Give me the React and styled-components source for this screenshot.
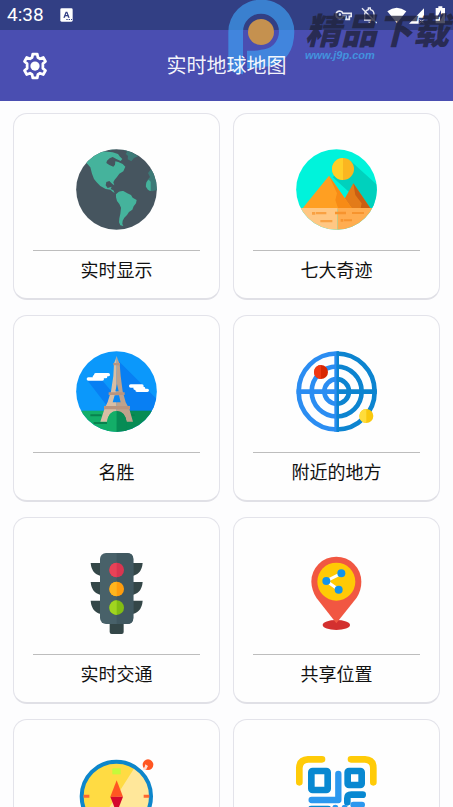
import React from 'react';
import styled, { createGlobalStyle } from 'styled-components';


function GearIcon () {
  return (
    <svg width="30" height="30" viewBox="0 0 24 24" aria-hidden="true">
      <path
        d="M10.2 2.5h3.6l.5 2.7 1.7 1 2.6-1 1.8 3.2-2.1 1.7v3.8l2.1 1.7-1.8 3.2-2.6-1-1.7 1-.5 2.7h-3.6l-.5-2.7-1.7-1-2.6 1-1.8-3.2 2.1-1.7v-3.800L3.600 8.400l1.800-3.200 2.600 1 1.700-1z"
        fill="none" stroke="#fff" strokeWidth="2.200" strokeLinejoin="round"
      />
      <circle cx="12" cy="12" r="3.700" fill="#fff" />
    </svg>
  );
}

function KeyboardBadge () {
  return (
    <svg width="13" height="14" viewBox="0 0 39 42" aria-hidden="true">
      <rect x="1" y="1" width="37" height="40" rx="4" fill="#fff" />
      <path d="M10 29 17 11h5l7 18h-5l-1-4h-7l-1 4zM17 21h5l-2.500-6z" fill="#323f84" />
      <path d="M19 33h4v3h-4zM26 33h4v3h-4zM33 33h3v3h-3z" fill="#323f84" />
    </svg>
  );
}

function StatusIcons () {
  return (
    <>
      <svg width="17" height="12" viewBox="348 26 51 36" aria-hidden="true">
        <path d="M362 32a11 11 0 1 0 10 16h9v9h10v-9h6v-9h-25a11 11 0 0 0-10-7z" fill="none" stroke="#e8e9f2" strokeWidth="5" />
        <circle cx="362" cy="43" r="4" fill="#e8e9f2" />
      </svg>
      <svg width="17" height="17" viewBox="423 18 51 51" aria-hidden="true">
        <path d="M434 57V39q2-11 11-13v-5h6v5q10 2 11 13v18z" fill="none" stroke="#e8e9f2" strokeWidth="4" />
        <path d="M426 22 470 66" stroke="#e8e9f2" strokeWidth="4" />
        <path d="M443 62h11q-5 6-11 0z" fill="#e8e9f2" />
      </svg>
      <svg width="39" height="17" viewBox="503 18 117 51" aria-hidden="true">
        <path d="M504 31Q532 10 561 31L533 67z" fill="#fff" />
        <path d="M569 68 614 22V50H598V68z" fill="#fff" />
        <path d="M602 56l11 11M613 56l-11 11" stroke="#fff" strokeWidth="3" />
      </svg>
      <svg width="11" height="18" viewBox="644 16 33 54" aria-hidden="true">
        <path d="M654 17h12v5h8v46h-28V22h8z" fill="#fff" />
        <path d="M662 28 651 48h8v14l11-21h-8z" fill="#323f84" />
      </svg>
    </>
  );
}

// all tile drawings share one square of 243 units
function Globe () {
  return (
    <TileArt viewBox="48 27 243 243">
      <clipPath id="globe"><circle cx="169.500" cy="148.500" r="121" /></clipPath>
      <g clipPath="url(#globe)">
        <rect x="48" y="27" width="243" height="243" fill="#46555f" />
        <path d="M149 32Q180 21 202 35L197 41 204 48 203 58 214 64 222 54 234 49 215 36 190 26 150 26z" fill="#3c7a77" />
        <path
          d="M78 68Q96 40 128 34L158 37 174 42 180 50 187 57 182 63 169 57 158 51 149 55 141 62 139 69 148 75 160 80 165 74 166 64 175 66 188 72 196 80 190 94 178 101 171 111 164 119 160 127 163 136 157 132 148 123 139 126 137 136 143 144 150 142 155 140 152 147 160 151 164 159 159 156 151 149 137 147 121 138 110 127 102 117 96 101 91 82 83 73z"
          fill="#45b39c"
        />
        <path
          d="M168 163Q176 152 190 153L202 160 213 165 218 173 230 180 228 190 221 199 217 209 207 216 201 225 193 233 188 242 187 252 190 258 181 256 177 247 178 235 181 221 183 203 178 192 171 183 168 172z"
          fill="#45b39c"
        />
        <path d="M273 88 264 99 270 111 263 119 258 128 257 140 264 150 276 154 292 150V90z" fill="#3c7a77" />
        <path d="M266 119q-9 7-8 20 4 12 14 14V125z" fill="#45b39c" />
      </g>
    </TileArt>
  );
}

function Pyramids () {
  return (
    <TileArt viewBox="48 27 243 243">
      <clipPath id="pyramids"><circle cx="169.500" cy="148.500" r="121" /></clipPath>
      <g clipPath="url(#pyramids)">
        <rect x="48" y="27" width="243" height="243" fill="#00f3db" />
        <path d="M212 63 295 138V205H250L158 112z" fill="#00d1bd" />
        <path d="M158 112 208 157 198 171 150 120z" fill="#00f3db" />
        <circle cx="189" cy="87" r="33" fill="#fbb620" />
        <path d="M189 54a33 33 0 0 0 0 66z" fill="#ffcf29" />
        <path d="M220 130 178 205H271z" fill="#e37b19" />
        <path d="M220 130 226 165 245 190 242 205H271z" fill="#c95e12" />
        <path d="M147 107 66 207H217z" fill="#ff9f22" />
        <path d="M147 107 171 160 166 180 175 207H217z" fill="#f78b15" />
        <rect x="48" y="204" width="125" height="70" fill="#ffc783" />
        <rect x="173" y="204" width="120" height="70" fill="#ffad50" />
        <g fill="#f7942e">
          <path d="M96 216h10v8H96zM108 216h31v7h-31zM121 240h36v7h-36z" opacity=".75" />
          <path d="M165 215h33v8h-33zM216 216h36v6h-36zM182 237h8v8h-8zM192 238h24v6h-24z" />
        </g>
      </g>
    </TileArt>
  );
}

function Tower () {
  return (
    <TileArt viewBox="48 30 243 243">
      <clipPath id="tower"><circle cx="169.500" cy="151.500" r="121" /></clipPath>
      <g clipPath="url(#tower)">
        <rect x="48" y="30" width="243" height="243" fill="#0b98fb" />
        <path d="M178 62 295 179V215H157L83 119 125 116 153 149z" fill="#087ff3" />
        <rect x="48" y="209" width="123" height="70" fill="#13ae68" />
        <rect x="170" y="209" width="123" height="70" fill="#078c55" />
        <path d="M91 220h34v6H91zM101 243h46v6h-46zM207 220h17v5h-17z" fill="#08824e" />
        <path d="M170 45 166 57 162 67 160 105 153 151 143 183 134 202 121 242H141Q146 211 170 210z" fill="#d8bea4" />
        <path d="M170 45 174 57 179 68 182 105 188 151 197 184 208 204 219 242H200Q195 212 170 210z" fill="#bea28c" />
        <path d="M171 129 166 151H176zM164 163 158 184H182L177 163z" fill="#0a88f5" />
        <path d="M146 154h48v8h-48zM132 195h78v10h-78zM160 66h20v7h-20z" fill="#b9957f" />
        <path d="M170 210Q144 211 141 245V275H170z" fill="#13ae68" />
        <path d="M170 210Q197 211 200 245V275H170z" fill="#078c55" />
      </g>
      <g stroke="#fff" strokeLinecap="round" strokeWidth="10">
        <path d="M107 101h38M103 107h34M85 114h42M212 135h34M225 142h26M231 148h31" />
      </g>
    </TileArt>
  );
}

function Radar () {
  return (
    <TileArt viewBox="48 30 243 243">
      <clipPath id="radarLeft"><rect x="48" y="30" width="129" height="243" /></clipPath>
      <clipPath id="radarRight"><rect x="170" y="30" width="122" height="243" /></clipPath>
      {[['#2b8df2', 'radarLeft'], ['#0c84d0', 'radarRight']].map(([color, side]) => (
        <g key={side} clipPath={`url(#${side})`} fill="none" stroke={color} strokeWidth="14">
          <circle cx="170" cy="151.500" r="114" />
          <circle cx="170" cy="151.500" r="75" />
          <circle cx="170" cy="151.500" r="37" />
          <path d="M50 152H290M170 32V272" />
        </g>
      ))}
      <circle cx="123" cy="93" r="21" fill="#d92702" />
      <path d="M123 72a21 21 0 0 0 0 42z" fill="#f03813" />
      <circle cx="259" cy="225" r="21" fill="#f9c80d" />
      <path d="M259 204a21 21 0 0 0 0 42z" fill="#ffdc3b" />
    </TileArt>
  );
}

function TrafficLight () {
  return (
    <TileArt viewBox="48 39 243 243">
      <path d="M92 69h38v40Q95 106 92 69zM92 126h38v40Q95 163 92 126zM92 182h38v41Q95 220 92 182zM210 69h38Q245 106 210 109zM210 126h38Q245 163 210 166zM210 182h38Q245 220 210 223z" fill="#344748" />
      <path d="M149 245h42v31q0 6-6 6h-30q-6 0-6-6z" fill="#344748" />
      <rect x="120" y="39" width="100" height="213" rx="18" fill="#486169" />
      <path d="M170 39h32q18 0 18 18v177q0 18-18 18h-32z" fill="#405860" />
      <circle cx="170" cy="90" r="22" fill="#d93550" />
      <path d="M170 68a22 22 0 0 0 0 44z" fill="#e84257" />
      <circle cx="170" cy="147" r="22" fill="#ff9d0d" />
      <path d="M170 125a22 22 0 0 0 0 44z" fill="#ffb51e" />
      <circle cx="170" cy="203" r="22" fill="#82bd13" />
      <path d="M170 181a22 22 0 0 0 0 44z" fill="#a0d520" />
    </TileArt>
  );
}

function SharePin () {
  return (
    <TileArt viewBox="48 39 243 243">
      <ellipse cx="169" cy="255" rx="41" ry="15" fill="#d3302f" />
      <path d="M169 50a75 75 0 0 0-75 75Q95 151 109 173L169 250 230 173Q244 151 244 125a75 75 0 0 0-75-75z" fill="#f15742" />
      <circle cx="169" cy="125" r="57" fill="#ffca05" />
      <path d="M184 100 139 123 176 149" fill="none" stroke="#fff" strokeWidth="9" />
      <g fill="#1194eb">
        <circle cx="184" cy="100" r="12" />
        <circle cx="139" cy="123" r="12" />
        <circle cx="176" cy="149" r="12" />
      </g>
    </TileArt>
  );
}

function Compass () {
  return (
    <TileArt viewBox="228 164 243 243">
      <circle cx="349" cy="288" r="104" fill="#ffdb43" />
      <path d="M405 200A104 104 0 0 1 293 376z" fill="#ffe79a" />
      <circle cx="349" cy="288" r="104" fill="none" stroke="#0d86cb" strokeWidth="12" />
      <rect x="337" y="204" width="25" height="18" fill="#c4fa3b" />
      <path d="M251 283h17v9h-17zM431 283h17v9h-17z" fill="#ff6730" />
      <path d="M350 240 331 289H369z" fill="#ff5722" />
      <path d="M331 289 350 338 369 289z" fill="#d5082d" />
      <circle cx="444" cy="193" r="16" fill="#ff5622" />
      <path d="M428 207Q436 201 436 192L444 197Q441 207 433 209z" fill="#ffded5" />
    </TileArt>
  );
}

function QrCode () {
  return (
    <TileArt viewBox="207 164 243 243">
      <g fill="none" stroke="#ffcb08" strokeWidth="20" strokeLinecap="round">
        <path d="M217 246V203Q218 178 243 177H285M372 177H414Q439 178 439 203V246" />
      </g>
      <g fill="none" stroke="#0888d1" strokeWidth="20">
        <rect x="253" y="212" width="49" height="57" rx="4" />
        <rect x="362" y="212" width="42" height="42" rx="4" />
        <path d="M361 306V294Q361 283 373 283H407M253 326H303" strokeLinecap="round" />
      </g>
      <path d="M334 221V299H254" fill="none" stroke="#2b98ef" strokeWidth="19" strokeLinecap="round" strokeLinejoin="round" />
      <path d="M379 313H405M325 322v8M353 322v8" fill="none" stroke="#2b98ef" strokeWidth="18" strokeLinecap="round" />
    </TileArt>
  );
}

const tiles = [
  { label: '实时显示', Art: Globe },
  { label: '七大奇迹', Art: Pyramids },
  { label: '名胜', Art: Tower },
  { label: '附近的地方', Art: Radar },
  { label: '实时交通', Art: TrafficLight },
  { label: '共享位置', Art: SharePin },
  { Art: Compass },
  { Art: QrCode },
];

function Tile ({ label, Art }) {
  return (
    <TileButton type="button">
      <Art />
      <TileLabel>{label}</TileLabel>
    </TileButton>
  );
}

function Watermark () {
  return (
    <WatermarkFrame>
      <svg width="67" height="75" viewBox="23 0 201 225" aria-hidden="true">
        <path
          d="M24 95A99 96 0 0 1 222 95Q221 180 150 198 115 205 80 205V152Q105 154 122 149A54 54 0 1 0 68 95V223Q44 221 24 208z"
          fill="#3d9cf0" opacity=".7"
        />
        <circle cx="122" cy="96" r="39" fill="#c5914f" />
      </svg>
      <WatermarkWords>
        <WatermarkName>精品下载</WatermarkName>
        <WatermarkSite>www.j9p.com</WatermarkSite>
      </WatermarkWords>
    </WatermarkFrame>
  );
}

function App () {
  return (
    <Screen>
      <GlobalStyle />
      <StatusBar>
        <Clock>4:38</Clock>
        <KeyboardBadge />
        <StatusRight>
          <StatusIcons />
        </StatusRight>
      </StatusBar>
      <AppBar>
        <IconButton type="button" aria-label="设置">
          <GearIcon />
        </IconButton>
        <Title>实时地球地图</Title>
      </AppBar>
      <TileGrid>
        {tiles.map((tile, i) => <Tile key={i} {...tile} />)}
      </TileGrid>
      <Watermark />
    </Screen>
  );
}

export default App;

const GlobalStyle = createGlobalStyle`
  * {
    box-sizing: border-box;
  }
  body {
    margin: 0;
    background: #fdfdfe;
    font-family: Roboto, "Noto Sans CJK SC", sans-serif;
  }
`;

// ----- css des barres
const Screen = styled.div`
  position: relative;
  display: flex;
  flex-direction: column;
  height: 100vh;
  overflow: hidden;
`;
const StatusBar = styled.div`
  display: flex;
  align-items: center;
  flex-shrink: 0;
  height: 30px;
  padding: 0 7px;
  gap: 16px;
  background: #323f84;
  color: #fff;
`;
const Clock = styled.span`
  font-size: 19px;
  line-height: 30px;
`;
const StatusRight = styled.div`
  display: flex;
  align-items: center;
  margin-left: auto;
  gap: 9px;
`;
const AppBar = styled.header`
  display: grid;
  grid-template-columns: 30px 1fr 30px;
  align-items: center;
  flex-shrink: 0;
  height: 71px;
  padding: 0 20px;
  background: #4a4eb1;
  color: #fff;
`;
const IconButton = styled.button`
  display: flex;
  padding: 0;
  border: 0;
  background: none;
  cursor: pointer;
`;
/* the title stays readable above the watermark */
const Title = styled.h1`
  position: relative;
  z-index: 1;
  margin: 0;
  color: rgba(255, 255, 255, 0.95);
  font-size: 20px;
  font-weight: 400;
  line-height: 28px;
  text-align: center;
`;

// ----- css des tuiles
const TileGrid = styled.main`
  display: grid;
  grid-template-columns: 1fr 1fr;
  grid-auto-rows: 187px;
  flex: 1;
  min-height: 0;
  gap: 15px 13px;
  padding: 12px 13px;
  overflow-y: auto;
  scrollbar-width: none;
`;
const TileButton = styled.button`
  display: flex;
  flex-direction: column;
  align-items: center;
  padding: 35px 19px 0;
  border: 1px solid #e3e3ea;
  border-bottom: 2px solid #e0e0e6;
  border-radius: 14px;
  background: #fefefe;
  color: #111;
  font-family: inherit;
  cursor: pointer;
`;
const TileArt = styled.svg`
  display: block;
  width: 81px;
  height: 81px;
  flex-shrink: 0;
`;
const TileLabel = styled.span`
  width: 100%;
  margin-top: 20px;
  padding-top: 7px;
  border-top: 1px solid #bdbdbd;
  font-size: 18px;
  line-height: 26px;
`;

// ----- css du filigrane
const WatermarkFrame = styled.div`
  position: absolute;
  top: 0;
  right: 0;
  display: flex;
  gap: 10px;
  padding-right: 4px;
  pointer-events: none;
`;
const WatermarkWords = styled.div`
  display: flex;
  flex-direction: column;
  padding-top: 8px;
`;
const WatermarkName = styled.span`
  color: rgba(32, 34, 58, 0.8);
  font-family: "Noto Sans CJK SC", sans-serif;
  font-size: 36px;
  font-style: italic;
  font-weight: 900;
  line-height: 40px;
`;
const WatermarkSite = styled.span`
  color: #4392de;
  font-family: "Liberation Sans", sans-serif;
  font-size: 11px;
  font-style: italic;
  font-weight: 700;
  line-height: 14px;
`;
